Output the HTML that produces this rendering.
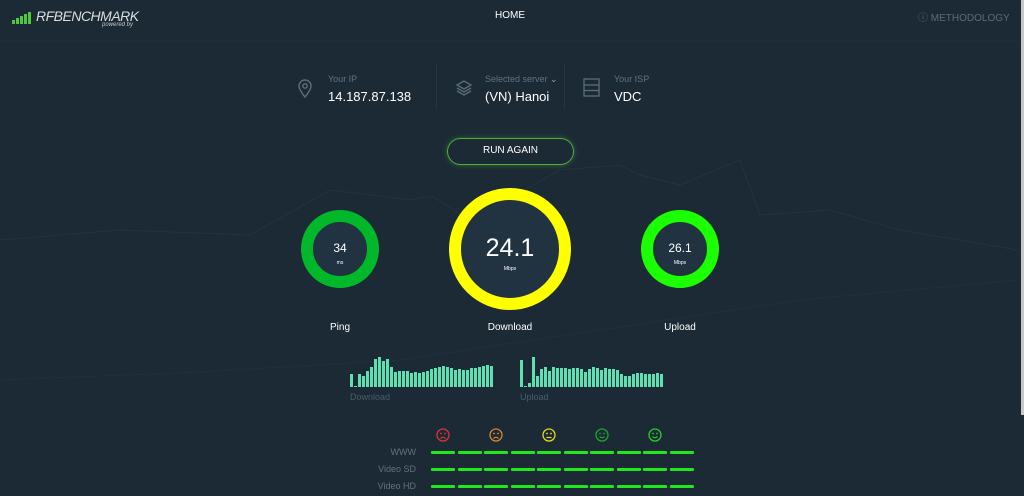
<!DOCTYPE html>
<html><head><meta charset="utf-8"><style>
*{margin:0;padding:0;box-sizing:border-box}
body{width:1024px;height:496px;overflow:hidden;background:#1c2a35;font-family:"Liberation Sans",sans-serif;color:#fff;position:relative}
.a{position:absolute}
.lbl{font-size:9px;color:#5f7480}
.val{font-size:13px;color:#fff}
.sep{position:absolute;width:1px;background:#26363f}
.ring{position:absolute;border-radius:50%;background:#213240}
.seg{position:absolute;height:3px;background:#1ee81e;width:24px;border-radius:1px}
.ql{position:absolute;width:100px;text-align:right;font-size:9px;color:#5f7480;left:316px}
</style></head><body>
<svg class="a" style="left:0;top:0" width="1024" height="496">
<polyline points="0,240 120,230 250,235 330,190 410,200 432,196 470,220 560,170 620,165 640,175 680,185 740,160 760,215 830,210 900,230 1018,250" fill="none" stroke="#1f3540" stroke-width="1"/>
<polyline points="0,380 200,372 400,360 600,330 800,300 1018,280" fill="none" stroke="#1e313b" stroke-width="1"/>
<line x1="0" y1="41" x2="1018" y2="41" stroke="#21313b"/>
</svg>
<div class="a" style="left:1021px;top:0;width:3px;height:415px;background:#c8c8c8"></div>
<svg class="a" style="left:12px;top:12px" width="22" height="12">
<rect x="0" y="8" width="3" height="4" fill="#4fc83c"/><rect x="4" y="6" width="3" height="6" fill="#4fc83c"/><rect x="8" y="4" width="3" height="8" fill="#4fc83c"/><rect x="12" y="2" width="3" height="10" fill="#4fc83c"/><rect x="16" y="0" width="3" height="12" fill="#4fc83c"/>
</svg>
<div class="a" style="left:36px;top:8px;font-size:14px;font-style:italic;color:#d8dde0;letter-spacing:-0.5px">RFBENCHMARK</div>
<div class="a" style="left:102px;top:22px;font-size:6px;font-style:italic;color:#c0c6ca">powered by</div>
<div class="a" style="left:495px;top:10px;font-size:10px;color:#fff">HOME</div>
<div class="a" style="left:918px;top:9px;font-size:10px;color:#5a6d78">&#9432; METHODOLOGY</div>
<svg class="a" style="left:297px;top:79px" width="16" height="20"><path d="M8 1a6 6 0 0 0-6 6c0 4 6 11 6 11s6-7 6-11a6 6 0 0 0-6-6z" fill="none" stroke="#5a6f7b" stroke-width="1.4"/><circle cx="8" cy="7" r="2.2" fill="none" stroke="#5a6f7b" stroke-width="1.4"/></svg>
<div class="a lbl" style="left:328px;top:74px">Your IP</div>
<div class="a val" style="left:328px;top:89px">14.187.87.138</div>
<div class="sep" style="left:436px;top:64px;height:45px"></div>
<svg class="a" style="left:455px;top:79px" width="18" height="18"><path d="M9 2L2 6l7 4 7-4z M2 9l7 4 7-4 M2 12l7 4 7-4" fill="none" stroke="#5a6f7b" stroke-width="1.3"/></svg>
<div class="a lbl" style="left:485px;top:74px">Selected server <span style="color:#8aa">&#8964;</span></div>
<div class="a val" style="left:485px;top:89px">(VN) Hanoi</div>
<div class="sep" style="left:564px;top:64px;height:45px"></div>
<svg class="a" style="left:583px;top:78px" width="18" height="20"><rect x="1" y="1" width="15" height="17" fill="none" stroke="#5a6f7b" stroke-width="1.3"/><line x1="1" y1="7" x2="16" y2="7" stroke="#5a6f7b" stroke-width="1.3"/><line x1="1" y1="12.5" x2="16" y2="12.5" stroke="#5a6f7b" stroke-width="1.3"/></svg>
<div class="a lbl" style="left:614px;top:74px">Your ISP</div>
<div class="a val" style="left:614px;top:89px">VDC</div>
<div class="a" style="left:447px;top:138px;width:127px;height:27px;border:1.5px solid #4caf3c;border-radius:14px;box-shadow:0 0 6px rgba(80,200,60,.4);text-align:center;line-height:24px;font-size:10px">RUN AGAIN</div>
<div class="ring" style="left:301px;top:210px;width:78px;height:78px;border:12px solid #00b82a"></div>
<div class="a" style="left:310px;top:241px;width:60px;text-align:center;font-size:12px">34</div>
<div class="a" style="left:310px;top:260px;width:60px;text-align:center;font-size:5px">ms</div>
<div class="ring" style="left:449px;top:188px;width:122px;height:122px;border:12px solid #ffff00"></div>
<div class="a" style="left:460px;top:234px;width:100px;text-align:center;font-size:25px">24.1</div>
<div class="a" style="left:460px;top:266px;width:100px;text-align:center;font-size:5px">Mbps</div>
<div class="ring" style="left:641px;top:210px;width:78px;height:78px;border:12px solid #1cff00"></div>
<div class="a" style="left:650px;top:241px;width:60px;text-align:center;font-size:12px">26.1</div>
<div class="a" style="left:650px;top:260px;width:60px;text-align:center;font-size:5px">Mbps</div>
<div class="a" style="left:300px;top:322px;width:80px;text-align:center;font-size:10px">Ping</div>
<div class="a" style="left:470px;top:322px;width:80px;text-align:center;font-size:10px">Download</div>
<div class="a" style="left:640px;top:322px;width:80px;text-align:center;font-size:10px">Upload</div>
<div id="dc" class="a" style="left:350px;top:350px;width:146px;height:37px"></div>
<div id="uc" class="a" style="left:520px;top:350px;width:146px;height:37px"></div>
<div class="a" style="left:350px;top:392px;font-size:9px;color:#4a5d68">Download</div>
<div class="a" style="left:520px;top:392px;font-size:9px;color:#4a5d68">Upload</div>
<div id="faces"></div>
<div class="ql" style="top:447px">WWW</div>
<div class="ql" style="top:464px">Video SD</div>
<div class="ql" style="top:481px">Video HD</div>
<div id="q"></div>
<script>
function bars(id,h){var e=document.getElementById(id),s='';h.forEach(function(v,i){s+='<div style="position:absolute;left:'+(i*4)+'px;bottom:0;width:3px;height:'+v+'px;background:#5ee0b0"></div>'});e.innerHTML=s}
bars('dc',[13,1,13,11,16,20,28,30,26,28,20,15,16,16,16,14,15,14,15,16,18,19,20,21,20,19,17,18,17,17,19,19,20,21,22,21]);
bars('uc',[27,1,4,30,11,18,20,16,20,19,19,19,18,19,19,18,15,18,20,19,17,19,18,18,17,13,11,11,13,14,14,13,13,13,14,13]);
var f='',cols=['#d33','#d8832a','#e8d81a','#1aa82a','#22d422'],m=['M4.5 10.5q2.5-2.5 5 0','M4.5 10.5q2.5-2.5 5 0','M4.5 9.5h5','M4.5 8.5q2.5 2.5 5 0','M4.5 8.5q2.5 2.5 5 0'];
for(var i=0;i<5;i++){var c=cols[i];f+='<svg class="a" style="left:'+(436+i*53)+'px;top:428px" width="14" height="14"><circle cx="7" cy="7" r="6" fill="none" stroke="'+c+'" stroke-width="1.3"/><circle cx="5" cy="5.5" r=".9" fill="'+c+'"/><circle cx="9" cy="5.5" r=".9" fill="'+c+'"/><path d="'+m[i]+'" fill="none" stroke="'+c+'" stroke-width="1.2"/></svg>'}
document.getElementById('faces').innerHTML=f;
var q='';[452,469,486].forEach(function(y){for(var i=0;i<10;i++)q+='<div class="seg" style="left:'+(431+i*26.5)+'px;top:'+(y-1)+'px"></div>'});document.getElementById('q').innerHTML=q;
</script>
</body></html>
